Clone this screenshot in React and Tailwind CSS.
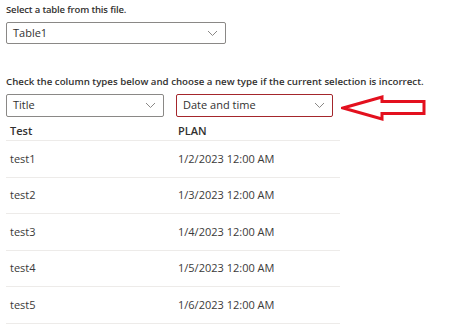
import React from "react";

const rows = [
  ["test1", "1/2/2023 12:00 AM"],
  ["test2", "1/3/2023 12:00 AM"],
  ["test3", "1/4/2023 12:00 AM"],
  ["test4", "1/5/2023 12:00 AM"],
  ["test5", "1/6/2023 12:00 AM"],
];

const Chevron = () => (
  <svg width="11" height="7" viewBox="0 0 11 7" fill="none">
    <path d="M1 1l4.5 4.5L10 1" stroke="#8a8886" strokeWidth="1" />
  </svg>
);

const Dropdown = ({ label, className }) => (
  <div
    className={`flex items-center justify-between bg-white rounded-[2px] border pl-[6px] pr-[7px] text-[11px] text-[#323130] ${className}`}
  >
    <span>{label}</span>
    <Chevron />
  </div>
);

const App = () => {
  return (
    <div
      className="w-[474px] h-[333px] bg-white overflow-hidden pl-[6px] pt-[3px]"
      style={{ fontFamily: '"Open Sans", "Noto Sans", sans-serif' }}
    >
      {/* Table picker */}
      <p className="text-[9.5px] font-semibold text-[#323130] leading-[14px] tracking-[-0.15px]">
        Select a table from this file.
      </p>
      <Dropdown label="Table1" className="mt-[5px] w-[220px] h-[22px] border-[#8a8886]" />

      {/* Column types */}
      <p className="mt-[31px] text-[9.7px] font-semibold text-[#323130] leading-[14px]">
        Check the column types below and choose a new type if the current selection is incorrect.
      </p>
      <div className="mt-[5px] flex items-start">
        <Dropdown label="Title" className="w-[158px] h-[23px] border-[#8a8886]" />
        <Dropdown label="Date and time" className="ml-[12px] w-[157px] h-[23px] border-[#a4262c]" />
        <svg width="90" height="30" viewBox="0 0 90 30" className="ml-[8px] -mb-[7px]">
          <path
            d="M2 14 L41 3 L41 7.5 L83 7.5 L83 19.5 L41 19.5 L41 25 Z"
            fill="none"
            stroke="#e3101e"
            strokeWidth="3"
            strokeLinejoin="miter"
          />
        </svg>
      </div>

      {/* Table */}
      <div className="w-[334px]">
        <div className="grid grid-cols-[170px_1fr] h-[24px] pt-[5px] items-center border-b border-[#edebe9] text-[11px] font-semibold text-[#323130]">
          <span className="pl-[4px]">Test</span>
          <span className="pl-[2px]">PLAN</span>
        </div>
        {rows.map(([name, date]) => (
          <div
            key={name}
            className="grid grid-cols-[170px_1fr] h-[36.6px] items-center border-b border-[#edebe9] text-[11px] text-[#3b3a39]"
          >
            <span className="pl-[4px]">{name}</span>
            <span className="pl-[2px]">{date}</span>
          </div>
        ))}
      </div>
    </div>
  );
};

export default App;
